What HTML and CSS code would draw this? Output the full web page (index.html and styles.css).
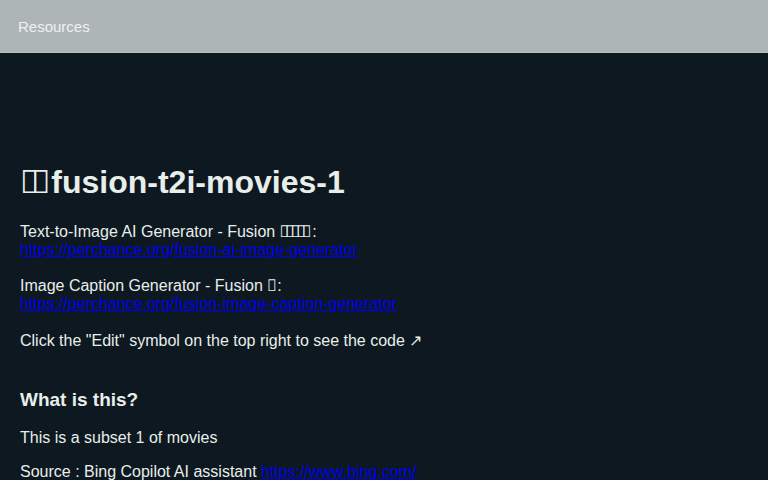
FILE: index.html
```html
<!DOCTYPE html>
<html lang="en">
    <head>
        <meta charset="UTF-8" />
        <meta name="viewport" content="width=device-width, initial-scale=1.0" />
        <title>fusion-t2i-movies-1</title>
        <link rel="stylesheet" href="styles.css">
    </head>

    <body>
        <div class="topbar">
            <a class="topbar__link" href="#">Resources</a>
        </div>

        <div class="container">
            <h1><span class="tofu">&#xE000;&#xE001;</span> fusion-t2i-movies-1</h1>

            <p class="intro">
                Text-to-Image AI Generator - Fusion <span class="tofu">&#xE002;&#xE003;&#xE004;&#xE005;&#xE006;</span> :<br />
                <a href="#">https://perchance.org/fusion-ai-image-generator</a><br /><br />
                Image Caption Generator - Fusion <span class="tofu">&#xE007;</span> :<br />
                <a href="#">https://perchance.org/fusion-image-caption-generator</a>
            </p>

            <p>Click the "Edit" symbol on the top right to see the code ↗</p>

            <h2>What is this?</h2>
            <p>This is a subset 1 of movies</p>
            <p>Source : Bing Copilot AI assistant <a href="#">https://www.bing.com/</a></p>
        </div>
    </body>
</html>
```

FILE: styles.css
```css
html {
    box-sizing: border-box;
    font-size: 16px;
}

*,
*:before,
*:after {
    box-sizing: inherit;
}

body,
h1,
h2,
p {
    margin: 0;
    padding: 0;
}

body {
    background: #0d1821;
    color: #e8eee9;
    font-family: "Liberation Sans", Arial, sans-serif;
}

.topbar {
    height: 53px;
    background: #aeb5b6;
    border-bottom: 1px solid #b9bfc0;
    display: flex;
    align-items: center;
    padding: 0 18px;
}

.topbar__link {
    color: #eef1f1;
    text-decoration: none;
    font-size: 15px;
}

.container {
    padding: 111px 20px 0;
}

h1 {
    font-size: 32px;
    line-height: 37px;
    font-weight: bold;
    margin-bottom: 22px;
}

h2 {
    font-size: 19px;
    font-weight: bold;
    margin: 39px 0 18px;
}

p {
    line-height: 18px;
    margin-bottom: 16px;
}

.intro {
    margin-bottom: 19px;
}

/* emoji with no glyph, shown as narrow boxes */
.tofu {
    font-family: "Noto Serif", serif;
    font-weight: normal;
    line-height: 1;
    letter-spacing: -0.25em;
}

a {
    color: #0000ee;
}
```
